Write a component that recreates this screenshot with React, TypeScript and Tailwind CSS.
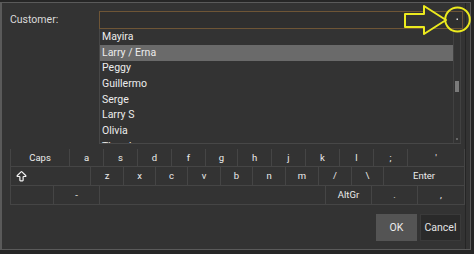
import { ArrowBigUp } from 'lucide-react';

const CUSTOMERS = ['Mayira', 'Larry / Erna', 'Peggy', 'Guillermo', 'Serge', 'Larry S', 'Olivia', 'Theodore'];

type Key = { label: string; w: number; icon?: boolean };

const ROWS: { h: string; keys: Key[] }[] = [
  {
    h: 'h-[18px]',
    keys: [
      { label: 'Caps', w: 60 }, { label: 'a', w: 34 }, { label: 's', w: 34 }, { label: 'd', w: 34 },
      { label: 'f', w: 34 }, { label: 'g', w: 32 }, { label: 'h', w: 34 }, { label: 'j', w: 34 },
      { label: 'k', w: 34 }, { label: 'l', w: 34 }, { label: ';', w: 34 }, { label: "'", w: 57 },
    ],
  },
  {
    h: 'h-[19px]',
    keys: [
      { label: '', w: 81, icon: true }, { label: 'z', w: 33 }, { label: 'x', w: 32 }, { label: 'c', w: 32 },
      { label: 'v', w: 33 }, { label: 'b', w: 32 }, { label: 'n', w: 33 }, { label: 'm', w: 33 },
      { label: '/', w: 33 }, { label: '\\', w: 32 }, { label: 'Enter', w: 81 },
    ],
  },
  {
    h: 'h-[19px]',
    keys: [
      { label: '', w: 44 }, { label: '-', w: 46 }, { label: '', w: 226 }, { label: 'AltGr', w: 46 },
      { label: '.', w: 46 }, { label: ',', w: 47 },
    ],
  },
];

export default function App() {
  return (
    <div className="relative w-[474px] h-[254px] bg-[#262626] pt-[2px] overflow-hidden" style={{ fontFamily: 'Roboto, "Noto Sans", sans-serif' }}>
      <div className="w-[471px] h-[248px] bg-[#333333] border-t border-l-2 border-r border-b border-[#5a5a5a]">
        <div className="w-[464px] h-full border-r border-[#252525] flex flex-col">
          {/* customer field */}
          <div className="flex items-center mt-[8px] pl-[8px]">
            <div className="w-[89px] text-[10.5px] text-[#dadada] leading-none">Customer:</div>
            <div className="w-[364px] h-[18px] border border-[#6e5536] bg-[#2f2f2f]" />
          </div>

          {/* dropdown list */}
          <div className="ml-[97px] w-[362px] h-[115px] border-l border-b border-[#474747] flex overflow-hidden">
            <div className="flex-1 pt-[0.3px] overflow-hidden">
              {CUSTOMERS.map(c => (
                <div
                  key={c}
                  className={`h-[15.7px] flex items-center pl-[2px] text-[10.5px] leading-none text-[#ececec] ${c === 'Larry / Erna' ? 'bg-[#6a6a6a]' : ''}`}
                >
                  {c}
                </div>
              ))}
            </div>
            <div className="w-[8px] border-l border-r border-[#414141] flex flex-col items-center">
              <div className="mt-[52px] w-[4px] h-[11px] bg-[#7a7a7a]" />
              <div className="mt-auto mb-[3px] w-[2px] h-[2px] bg-[#666666]" />
            </div>
          </div>

          {/* keyboard */}
          <div className="mt-[5px] ml-[8px] flex flex-col">
            {ROWS.map((row, ri) => (
              <div key={ri} className={`flex ${row.h}`}>
                {row.keys.map((k, ki) => (
                  <div
                    key={ki}
                    className={`flex items-center border-b border-r border-[#454545] text-[9.5px] leading-none text-[#ececec] ${ki === 0 ? 'border-l' : ''} ${k.icon ? 'justify-start pl-[4px]' : 'justify-center'}`}
                    style={{ width: k.w }}
                  >
                    {k.icon ? <ArrowBigUp size={13} strokeWidth={2.2} className="text-[#f4f4f4]" /> : k.label}
                  </div>
                ))}
              </div>
            ))}
          </div>

          {/* buttons */}
          <div className="mt-[9px] flex justify-end gap-[3px] pr-[4px]">
            <button className="w-[41px] h-[27px] p-0 bg-[#545454] text-[10.5px] text-[#ececec]">OK</button>
            <button className="w-[41px] h-[27px] p-0 bg-[#2a2a2a] border border-[#3a3a3a] text-[10.5px] text-[#e4e4e4]">Cancel</button>
          </div>
        </div>
      </div>

      {/* annotation overlay */}
      <svg className="absolute left-0 top-0" width="474" height="40" viewBox="0 0 474 40">
        <polygon
          points="405,14 424,14 424,6 446,20 424,34 424,27 405,27"
          fill="#333333"
          stroke="#ecea1e"
          strokeWidth="2"
          strokeLinejoin="round"
        />
        <ellipse cx="457.5" cy="19.5" rx="12.3" ry="12" fill="none" stroke="#ecea1e" strokeWidth="2" />
        <rect x="456.5" y="18.5" width="1.5" height="1.5" fill="#e0e0e0" />
      </svg>
    </div>
  );
}
